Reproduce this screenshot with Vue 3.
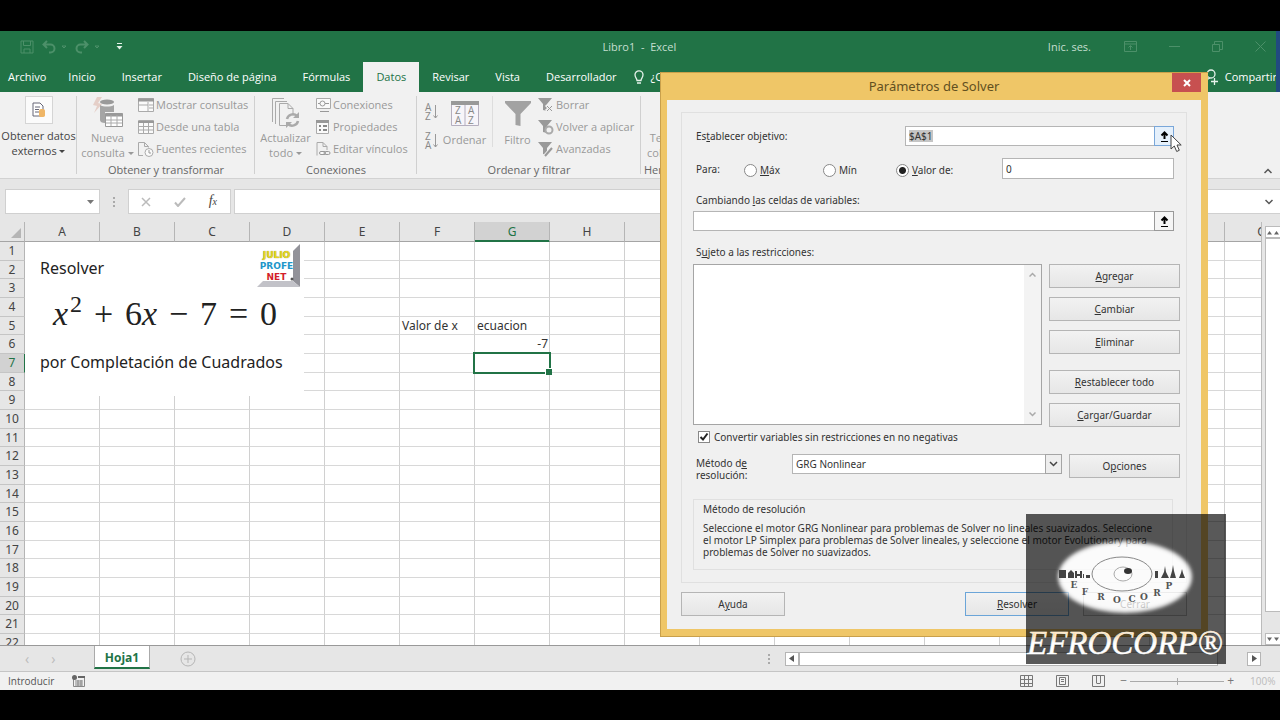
<script setup>
import { ref, computed, onMounted, onUnmounted } from 'vue'

const alphabet = 'ABCDEFGHIJKLMNOPQRSTUVWXYZ'
const view = ref({ width: window.innerWidth, height: window.innerHeight })
const columns = computed(() => alphabet.slice(0, Math.max(8, Math.ceil((view.value.width - 43) / 75))).split(''))
const rowCount = computed(() => Math.max(10, Math.ceil(((view.value.height - 315) * 3) / 56)))
const tableWidth = computed(() => 25 + columns.value.length * 75 + 'px')
const cells = { F5: 'Valor de x', G5: 'ecuacion', G6: '-7' }
const tabs = ['Archivo', 'Inicio', 'Insertar', 'Diseño de página', 'Fórmulas', 'Datos', 'Revisar', 'Vista', 'Desarrollador']
const arcLetters = [
  ['E', 48, 74], ['F', 59, 81], ['R', 75, 86], ['O', 91, 89],
  ['C', 106, 88], ['O', 118, 86], ['R', 131, 82], ['P', 143, 75]
]

const target = ref('$A$1')
const targetInput = ref(null)
const goal = ref('valor')
const goalValue = ref('0')
const variableCells = ref('')
const nonNegative = ref(true)
const method = ref('GRG Nonlinear')
const formula = ref('')
const nameBox = ref('')
const zoomLevel = ref(100)

function measure() {
  view.value = { width: window.innerWidth, height: window.innerHeight }
}

onMounted(() => {
  window.addEventListener('resize', measure)
  targetInput.value.focus()
  targetInput.value.select()
})
onUnmounted(() => window.removeEventListener('resize', measure))
</script>

<template>
  <div class="screen">
    <div class="window">
      <header class="titlebar">
        <div class="quick">
          <button aria-label="Guardar"><svg width="14" height="14" viewBox="0 0 14 14"><path d="M1 1h12v12H1zM3.500 1v4.500h7V1M4 13V9h6v4" /></svg></button>
          <button aria-label="Deshacer"><svg width="25" height="14" viewBox="0 0 25 14"><path d="M5 1 1.500 4.500 5 8M2 4.500h6.500a4 4 0 0 1 0 8H7" stroke-width="2" /><path d="M20 6h4l-2 2z" /></svg></button>
          <button aria-label="Rehacer"><svg width="25" height="14" viewBox="0 0 25 14"><path d="M9 1l3.500 3.500L9 8M12 4.500H5.500a4 4 0 0 0 0 8H7" stroke-width="2" /><path d="M20 6h4l-2 2z" /></svg></button>
          <button class="bright" aria-label="Personalizar"><svg width="7" height="7" viewBox="0 0 7 7"><path d="M1 .500h5" /><path class="solid" d="M.500 3h6L3.500 6.500z" /></svg></button>
        </div>
        <div class="title">Libro1&nbsp; -&nbsp; Excel</div>
        <a class="signin" href="#">Inic. ses.</a>
        <div class="winctl">
          <button aria-label="Opciones de cinta"><svg width="13" height="11" viewBox="0 0 13 11"><path d="M.500.500h12v10H.500zM.500 3h12M6.500 9V5M4.500 6.500l2-2 2 2" /></svg></button>
          <button aria-label="Minimizar"><svg width="11" height="11" viewBox="0 0 11 11"><path d="M0 5.500h11" /></svg></button>
          <button aria-label="Restaurar"><svg width="11" height="11" viewBox="0 0 11 11"><path d="M.500 3.500h7v7h-7zM2.500 3.500v-3h8v8h-3" /></svg></button>
          <button aria-label="Cerrar libro"><svg width="11" height="11" viewBox="0 0 11 11"><path d="M.500.500l10 10M10.500.500l-10 10" /></svg></button>
        </div>
      </header>

      <nav class="tabs">
        <a v-for="t in tabs" :key="t" href="#" :class="{ active: t === 'Datos', file: t === 'Archivo' }">{{ t }}</a>
        <a href="#" class="tell"><svg width="10" height="15" viewBox="0 0 10 15"><path d="M3 10.500C3 8.500 1 7.500 1 4.800a4 4 0 0 1 8 0C9 7.500 7 8.500 7 10.500zM3 13h4" /></svg>¿Qué desea hacer?</a>
        <a href="#" class="share"><svg width="13" height="17" viewBox="0 0 13 17"><circle cx="6" cy="5" r="4" /><path d="M1 15c0-3 1-5 4-6M9.500 9v7M6 12.500h7" /></svg>Compartir</a>
      </nav>

      <section class="ribbon">
        <div class="group g1">
          <button class="big enabled">
            <span class="framed"><svg width="14" height="16" viewBox="0 0 14 16"><path d="M1 1h7l3 3v10H1zM3 5h5M3 7.500h4M3 10h4" fill="#fff" stroke="#667"/><path d="M7 8.500c0-2 6-2 6 0v5c0 2-6 2-6 0z" fill="#efb667" /></svg></span>
            <span>Obtener datos<br>externos <i class="caret"></i></span>
          </button>
        </div>
        <div class="group g2">
          <div class="tools">
            <button class="big">
              <svg width="32" height="32" viewBox="0 0 32 32"><path d="M5 0 1 8l4 1-3 7 8-9-4-1 4-6z" fill="#e5cfc8"/><ellipse cx="15" cy="5" rx="7" ry="2.500" fill="#9a9a9a"/><path d="M8 8c3 2 11 2 14 0v7H13v11c-3 0-5-1-5-3z" fill="#a5a5a5"/><path d="M13.500 16.500h17v13h-17z" fill="#fff" stroke="#999"/><path d="M13.500 18h17" stroke="#999" stroke-width="3"/><path d="M14 23h16M14 26h16M19 18v11M25 18v11" stroke="#aaa"/></svg>
              <span>Nueva<br>consulta <i class="caret"></i></span>
            </button>
            <div class="stack">
              <button><svg width="16" height="14" viewBox="0 0 16 14"><path d="M.500.500h15v13H.500zM10 4v9M1 7h9M11 7h4M11 10h4" fill="#fafafa" stroke="#aaa"/><path d="M0 2h16" stroke="#999" stroke-width="3"/></svg>Mostrar consultas</button>
              <button><svg width="16" height="14" viewBox="0 0 16 14"><path d="M.500.500h15v13H.500zM5.500 2v11M10.500 2v11M1 6.500h15M1 10h15" fill="#fafafa" stroke="#aaa"/><path d="M0 2h16" stroke="#999" stroke-width="2"/></svg>Desde una tabla</button>
              <button><svg width="16" height="15" viewBox="0 0 16 15"><path d="M5 13.500H.500V.500h6l4 4v1M6.500.500v4h4" fill="none" stroke="#aaa"/><circle cx="11" cy="10.500" r="4" fill="#fafafa" stroke="#aaa"/><path d="M11 8v3h2" fill="none" stroke="#999"/></svg>Fuentes recientes</button>
            </div>
          </div>
          <p>Obtener y transformar</p>
        </div>
        <div class="group g3">
          <div class="tools">
            <button class="big">
              <svg width="30" height="32" viewBox="0 0 30 32"><path d="M1.500 25V1.500H13M4.500 27V4.500H16M8.500 28.500v-22H17l5 5v7M17 6.500v5h5M8.500 28.500H15" fill="none" stroke="#aaa"/><path d="M16 22a6 6 0 0 1 10-3M27 24a6 6 0 0 1-10 3" fill="none" stroke="#aaa" stroke-width="2.500"/><path d="M28 15v6h-6zM15 31v-6h6z" fill="#aaa"/></svg>
              <span>Actualizar<br>todo <i class="caret"></i></span>
            </button>
            <div class="stack">
              <button><svg width="15" height="14" viewBox="0 0 15 14"><path d="M.500.500h14v10H.500z" fill="#fafafa" stroke="#aaa"/><circle cx="6.500" cy="5.500" r="2.500" fill="none" stroke="#999"/><path d="M2 5.500h2M9 5.500h4M4 13.500h9" stroke="#999"/></svg>Conexiones</button>
              <button><svg width="15" height="14" viewBox="0 0 15 14"><path d="M.500.500h12v13H.500z" fill="#fafafa" stroke="#aaa"/><path d="M0 1.500h13" stroke="#999" stroke-width="3"/><path d="M3 6h2M3 10h2M7 6h4M7 10h4" stroke="#888" stroke-width="2"/></svg>Propiedades</button>
              <button><svg width="15" height="14" viewBox="0 0 15 14"><path d="M1 13.500V.500h6l4 4V8M7 .500v4h4" fill="none" stroke="#aaa"/><rect x="3.500" y="9.500" width="6" height="3" rx="1.500" fill="#fafafa" stroke="#999"/><rect x="8" y="9.500" width="6" height="3" rx="1.500" fill="none" stroke="#999"/></svg>Editar vínculos</button>
            </div>
          </div>
          <p>Conexiones</p>
        </div>
        <div class="group g4">
          <div class="tools">
            <div class="sorts">
              <button aria-label="Ordenar de A a Z"><svg width="14" height="18" viewBox="0 0 14 18"><text x="0" y="8">A</text><text x="0" y="17">Z</text><path d="M10.500 2v13M8.500 12.500l2 2.500 2-2.500" /></svg></button>
              <button aria-label="Ordenar de Z a A"><svg width="14" height="18" viewBox="0 0 14 18"><text x="0" y="8">Z</text><text x="0" y="17">A</text><path d="M10.500 2v13M8.500 12.500l2 2.500 2-2.500" /></svg></button>
            </div>
            <button class="big sort">
              <svg width="28" height="25" viewBox="0 0 28 25"><path d="M.500.500h27v24H.500zM14 3v21" fill="#f7f5fa" stroke="#b5afbf"/><path d="M0 2h28" stroke="#999" stroke-width="4"/><text x="4" y="13">Z</text><text x="4" y="23">A</text><text x="17" y="13">A</text><text x="17" y="23">Z</text></svg>
              <span>Ordenar</span>
            </button>
            <button class="big filter">
              <svg width="28" height="28" viewBox="0 0 28 28"><path d="M1 1h26v2L16.500 14v12l-5-1V14L1 3z" fill="#a2a2a2"/></svg>
              <span>Filtro</span>
            </button>
            <div class="stack">
              <button><svg width="16" height="15" viewBox="0 0 16 15"><path d="M0 0h14L9 6v7l-4-1V6z" fill="#999"/><path d="M8 7l6 6M14 7l-6 6" stroke="#f1f1f1" stroke-width="3"/><path d="M9 8l5 5M14 8l-5 5" stroke="#999"/></svg>Borrar</button>
              <button><svg width="16" height="15" viewBox="0 0 16 15"><path d="M0 0h14L9 6v7l-4-1V6z" fill="#999"/><circle cx="11" cy="10" r="3.500" fill="#f1f1f1" stroke="#aaa" stroke-width="2"/></svg>Volver a aplicar</button>
              <button><svg width="16" height="15" viewBox="0 0 16 15"><path d="M0 0h14L9 6v7l-4-1V6z" fill="#999"/><path d="M7 14l7-8" stroke="#f1f1f1" stroke-width="4"/><path d="M7 14l7-8" stroke="#999" stroke-width="2"/></svg>Avanzadas</button>
            </div>
          </div>
          <p>Ordenar y filtrar</p>
        </div>
        <div class="group g5">
          <div class="tools">
            <button class="big">
              <svg width="28" height="30" viewBox="0 0 28 30"><path d="M4.500 8.500h18v14h-18zM14 9v13" fill="#fafafa" stroke="#aaa"/></svg>
              <span>Texto en<br>columnas</span>
            </button>
          </div>
          <p>Herramientas de datos</p>
        </div>
        <button class="collapse" aria-label="Contraer la cinta"><svg width="8" height="6" viewBox="0 0 8 6"><path d="M.500 5 4 1.500 7.500 5" /></svg></button>
      </section>

      <section class="formula">
        <div class="namebox"><input v-model="nameBox" aria-label="Cuadro de nombres"><svg width="7" height="4" viewBox="0 0 7 4"><path d="M0 0h7L3.500 4z" fill="#777"/></svg></div>
        <span class="grip"></span>
        <div class="fx">
          <button aria-label="Cancelar"><svg width="10" height="10" viewBox="0 0 10 10"><path d="M1 1l8 8M9 1L1 9" stroke="#bbb" stroke-width="1.500"/></svg></button>
          <button aria-label="Introducir"><svg width="12" height="10" viewBox="0 0 12 10"><path d="M1 5.500 4 9l7-8" fill="none" stroke="#bbb" stroke-width="2"/></svg></button>
          <button class="fn" aria-label="Insertar función">f<small>x</small></button>
        </div>
        <div class="entry"><input v-model="formula" aria-label="Barra de fórmulas"><svg width="8" height="6" viewBox="0 0 8 6"><path d="M.500 1 4 4.500 7.500 1" /></svg></div>
      </section>

      <main class="sheet">
        <div class="cells">
          <table :style="{ width: tableWidth }">
            <thead>
              <tr>
                <th class="corner"><svg width="10" height="10" viewBox="0 0 10 10"><path d="M10 0v10H0z" fill="#b5b5b5"/></svg></th>
                <th v-for="c in columns" :key="c" :class="{ current: c === 'G' }">{{ c }}</th>
              </tr>
            </thead>
            <tbody>
              <tr v-for="r in rowCount" :key="r">
                <th :class="{ current: r === 7 }">{{ r }}</th>
                <td v-for="c in columns" :key="c" :class="{ number: c + r === 'G6', selected: c + r === 'G7' }">{{ cells[c + r] }}</td>
              </tr>
            </tbody>
          </table>
          <div class="picture">
            <div class="logo">
              <svg width="43" height="43" viewBox="0 0 43 43"><path d="M36 7l7-7v43l-7-6z" fill="#929299"/><path d="M0 43l6-6h30l7 6z" fill="#c2c2c8"/><circle cx="35" cy="35" r="1.500" fill="#555"/></svg>
              <b class="yellow">JULIO</b><b class="blue">PROFE</b><b class="red">NET</b>
            </div>
            <p>Resolver</p>
            <div class="equation"><span><i>x</i><sup>2</sup></span><span>+</span><span>6<i>x</i></span><span>−</span><span>7</span><span>=</span><span>0</span></div>
            <p>por Completación de Cuadrados</p>
          </div>
        </div>
        <div class="vscroll">
          <button aria-label="Desplazar arriba"><svg width="14" height="5" viewBox="0 0 14 5"><path d="M1 4.500h5L3.500 1zM8 4.500h5L10.500 1z" /></svg></button>
          <div class="track"></div>
          <button aria-label="Desplazar abajo"><svg width="14" height="5" viewBox="0 0 14 5"><path d="M1 .500h5L3.500 4zM8 .500h5L10.500 4z" /></svg></button>
        </div>
      </main>

      <footer class="sheetbar">
        <div class="arrows"><button aria-label="Hoja anterior">‹</button><button aria-label="Hoja siguiente">›</button></div>
        <a href="#" class="sheettab">Hoja1</a>
        <button class="add" aria-label="Hoja nueva"><svg width="16" height="16" viewBox="0 0 16 16"><circle cx="8" cy="8" r="7" /><path d="M8 4v8M4 8h8" /></svg></button>
        <span class="grip"></span>
        <div class="hscroll">
          <button aria-label="Desplazar a la izquierda"><svg width="5" height="7" viewBox="0 0 5 7"><path d="M5 0v7L0 3.500z" /></svg></button>
          <div class="thumb"></div>
          <button aria-label="Desplazar a la derecha"><svg width="5" height="7" viewBox="0 0 5 7"><path d="M0 0v7l5-3.500z" /></svg></button>
        </div>
      </footer>

      <footer class="status">
        <span>Introducir</span>
        <svg width="13" height="12" viewBox="0 0 13 12"><path d="M1.500 4v7.500h11v-10H6M3 6h8M3 8h8M3 10h8M6 5v6M9 5v6" fill="none" stroke="#888"/><path d="M6 2h7" stroke="#666" stroke-width="2"/><circle cx="2.500" cy="2.500" r="2.500" fill="#666"/></svg>
        <div class="views">
          <button aria-label="Normal"><svg width="13" height="12" viewBox="0 0 13 12"><path d="M.500.500h12v11H.500zM4.500 0v12M8.500 0v12M0 4.500h13M0 8.500h13" /></svg></button>
          <button aria-label="Diseño de página"><svg width="13" height="12" viewBox="0 0 13 12"><path d="M.500.500h12v11H.500zM3.500 2.500h6v7h-6zM5 4.500h3M5 6.500h3" /></svg></button>
          <button aria-label="Vista previa de salto de página"><svg width="13" height="12" viewBox="0 0 13 12"><path d="M.500 11.500V.500h12v11zM4.500 1v7M8.500 1v7M4.500 8.500h4" /></svg></button>
        </div>
        <div class="zoom">
          <button aria-label="Alejar">−</button>
          <input v-model="zoomLevel" type="range" min="10" max="190" aria-label="Zoom">
          <button aria-label="Acercar">+</button>
        </div>
        <span class="percent">100%</span>
      </footer>

      <form class="dialog" role="dialog" aria-labelledby="dlg-title" @submit.prevent>
        <header>
          <h1 id="dlg-title">Parámetros de Solver</h1>
          <button type="button" aria-label="Cerrar cuadro"><svg width="8" height="8" viewBox="0 0 8 8"><path d="M1 1l6 6M7 1L1 7" stroke="#fff" stroke-width="2"/></svg></button>
        </header>
        <div class="body">
          <div class="frame">
            <div class="line first">
              <label for="target">Es<u>t</u>ablecer objetivo:</label>
              <div class="refbox"><input id="target" ref="targetInput" v-model="target"><button type="button" class="hot" aria-label="Elegir celda objetivo"><svg width="9" height="11" viewBox="0 0 9 11"><path d="M4.500 8V2M1.500 4.500l3-3 3 3" /><path d="M1 10.500h7" class="thin" /></svg></button></div>
            </div>
            <div class="line goals">
              <span class="para">Para:</span>
              <label class="max"><input v-model="goal" type="radio" value="max"><span><u>M</u>áx</span></label>
              <label class="min"><input v-model="goal" type="radio" value="min"><span>Mín</span></label>
              <label class="val"><input v-model="goal" type="radio" value="valor"><span><u>V</u>alor de:</span></label>
              <input v-model="goalValue" class="value" aria-label="Valor">
            </div>
            <label class="caption" for="vars">Cambiando <u>l</u>as celdas de variables:</label>
            <div class="refbox wide"><input id="vars" v-model="variableCells"><button type="button" aria-label="Elegir celdas"><svg width="9" height="11" viewBox="0 0 9 11"><path d="M4.500 8V2M1.500 4.500l3-3 3 3" /><path d="M1 10.500h7" class="thin" /></svg></button></div>
            <label class="caption" for="constraints">S<u>u</u>jeto a las restricciones:</label>
            <div class="constraints">
              <div class="list">
                <select id="constraints" size="8"></select>
                <div class="bar"><svg width="7" height="5" viewBox="0 0 7 5"><path d="M.500 4.500l3-3 3 3" /></svg><svg width="7" height="5" viewBox="0 0 7 5"><path d="M.500.500l3 3 3-3" /></svg></div>
              </div>
              <div class="actions">
                <button type="button" class="btn"><u>A</u>gregar</button>
                <button type="button" class="btn"><u>C</u>ambiar</button>
                <button type="button" class="btn"><u>E</u>liminar</button>
                <button type="button" class="btn apart"><u>R</u>establecer todo</button>
                <button type="button" class="btn"><u>C</u>argar/Guardar</button>
              </div>
            </div>
            <label class="check"><input v-model="nonNegative" type="checkbox"><svg width="12" height="12" viewBox="0 0 12 12"><path d="M2.500 6 5 8.500l4.500-6" /></svg>Convertir variables sin restricciones en no negativas</label>
            <div class="method">
              <label for="method">Método d<u>e</u><br>resolución:</label>
              <div class="pick"><select id="method" v-model="method"><option>GRG Nonlinear</option><option>Simplex LP</option><option>Evolutionary</option></select><span><svg width="9" height="6" viewBox="0 0 9 6"><path d="M1 1l3.500 3.500L8 1" /></svg></span></div>
              <button type="button" class="btn">O<u>p</u>ciones</button>
            </div>
            <section class="help">
              <h2>Método de resolución</h2>
              <p>Seleccione el motor GRG Nonlinear para problemas de Solver no lineales suavizados. Seleccione<br>el motor LP Simplex para problemas de Solver lineales, y seleccione el motor Evolutionary para<br>problemas de Solver no suavizados.</p>
            </section>
          </div>
          <div class="bottom">
            <button type="button" class="btn">A<u>y</u>uda</button>
            <button type="submit" class="btn default"><u>R</u>esolver</button>
            <button type="button" class="btn">Cerrar</button>
          </div>
        </div>
        <svg class="pointer" width="12" height="19" viewBox="0 0 12 19"><path d="M1 1v14l3.300-3 2.400 5.500 2.600-1.200L7 11h4.200z" /></svg>
      </form>

      <svg class="watermark" width="200" height="150" viewBox="0 0 200 150">
        <defs>
          <filter id="soft" x="-20%" y="-20%" width="140%" height="140%"><feGaussianBlur stdDeviation="2" /></filter>
          <mask id="hole"><rect width="200" height="150" fill="#fff" /><ellipse cx="99" cy="63" rx="66" ry="35" fill="#000" filter="url(#soft)" /></mask>
          <linearGradient id="cream" x1="0" y1="0" x2="0" y2="1"><stop offset=".3" stop-color="#ffe0b0" /><stop offset=".5" stop-color="#fff" /></linearGradient>
        </defs>
        <rect width="200" height="150" fill="#000" fill-opacity=".65" mask="url(#hole)" />
        <ellipse cx="99" cy="63" rx="66" ry="35" fill="#fff" fill-opacity=".75" filter="url(#soft)" />
        <g fill="none" stroke="#888"><ellipse cx="96" cy="60" rx="30" ry="17" /><ellipse cx="97" cy="60" rx="9" ry="7" stroke="#aaa" /></g>
        <ellipse cx="102" cy="57" rx="4" ry="3" fill="#333" />
        <path d="M33 56h7v8h-7zM42 64v-5l3-3 3 3v5zM49 57h2v3h3v-3h2v7h-2v-2h-3v2h-2zM57 60h1v4h-1zM60 61h4v3h-4zM129 57h3v7h-3zM135 64l3-6 1-6 1 6 3 6zM144 64l2-7 1-6 1 6 2 7zM153 64l2-5 1-4 1 4 2 5z" fill="#444" />
        <text v-for="(l, i) in arcLetters" :key="i" class="arc" :x="l[1]" :y="l[2]">{{ l[0] }}</text>
        <text class="brand" x="1" y="140" fill="url(#cream)">EFROCORP®</text>
      </svg>
      <div class="desktop-edge"></div>
    </div>
  </div>
</template>

<style>
body { background: #000; }
</style>

<style scoped>
* { box-sizing: border-box; }
.screen { height: 100vh; padding: 31px 0 30px; background: #000; font: 11px/14px "Open Sans", "Noto Sans", sans-serif; color: #444; overflow: hidden; }
.window { position: relative; display: flex; flex-direction: column; height: 100%; background: #e6e6e6; overflow: hidden; }
button { font: inherit; color: inherit; border: 0; padding: 0; margin: 0; background: none; }
input, select { font: inherit; color: inherit; margin: 0; outline: 0; min-width: 0; border-radius: 0; }
a { color: inherit; text-decoration: none; }
p, h1, h2 { margin: 0; font: inherit; }
svg { flex: none; display: block; }
u { text-underline-offset: 1px; }

.titlebar { display: flex; align-items: center; height: 31px; background: #217346; position: relative; }
.quick { display: flex; align-items: center; gap: 8px; padding-left: 20px; }
.quick svg, .winctl svg { fill: none; stroke: #4c9069; }
.quick .bright { margin-left: 8px; }
.quick .bright svg { stroke: #e5f2ea; }
.quick .bright .solid { fill: #e5f2ea; stroke: none; }
.title { flex: 1; text-align: center; color: #c5dfd0; padding-left: 108px; }
.signin { color: #c5dfd0; }
.winctl { display: flex; gap: 32px; padding: 0 14px 0 33px; }
.tabs { display: flex; height: 30px; background: #217346; color: #fff; font-weight: 500; line-height: 30px; white-space: nowrap; }
.tabs a { padding: 0 13px; }
.tabs .file { padding: 0 9px 0 8px; }
.tabs .active { background: #f1f1f1; color: #217346; }
.tabs .tell { display: flex; align-items: center; gap: 7px; padding-left: 4px; font-weight: 400; }
.tabs svg { fill: none; stroke: #e5f2ea; stroke-width: 1.3; }
.tabs .share { display: flex; align-items: center; gap: 7px; margin-left: auto; padding: 0 3px; }

.ribbon { display: flex; height: 87px; background: #f1f1f1; border-bottom: 1px solid #d2d2d2; position: relative; color: #999; white-space: nowrap; }
.group { display: flex; flex-direction: column; justify-content: space-between; padding: 4px 0 0; position: relative; flex: none; }
.group::after { content: ""; position: absolute; right: 0; top: 4px; bottom: 4px; width: 1px; background: #d0d0d0; }
.group p { text-align: center; color: #666; line-height: 14px; padding-bottom: 1px; }
.tools { display: flex; align-items: flex-start; }
.g1 { width: 77px; }
.g2 { width: 178px; }
.g3 { width: 162px; }
.g4 { width: 224px; }
.g5 { width: 130px; }
.big { display: flex; flex-direction: column; align-items: center; justify-content: flex-start; gap: 1px; line-height: 15px; padding-top: 1px; }
.enabled { color: #444; gap: 4px; padding: 0; }
.framed { display: grid; place-items: center; width: 28px; height: 28px; background: #fbfbfb; border: 1px solid #d5d5d5; }
.caret { display: inline-block; border: 3px solid transparent; border-top-color: currentColor; border-bottom: 0; vertical-align: 2px; }
.stack { display: flex; flex-direction: column; line-height: 18px; gap: 4px; }
.stack button { display: flex; align-items: center; gap: 2px; height: 18px; }
.g2 .big { width: 61px; }
.g3 .big { width: 61px; }
.g4 .sorts { display: flex; flex-direction: column; gap: 11px; padding: 7px 0 0 8px; width: 24px; }
.g4 svg { overflow: visible; }
.g4 text { font: 10px "Open Sans", sans-serif; fill: #888; }
.sorts path { fill: none; stroke: #999; }
.sort { width: 47px; padding-top: 5px; gap: 6px; }
.filter { width: 46px; padding: 4px 4px 0 8px; gap: 4px; margin-left: 4px; border-left: 1px solid #ddd; }
.g5 .big { padding-left: 6px; }
.g5 .tools { padding-top: 2px; }
.g5 p { text-align: left; padding-left: 3px; }
.collapse { position: absolute; right: 8px; bottom: 4px; }
.collapse svg, .entry svg { fill: none; stroke: #555; stroke-width: 1.500; }

.formula { display: flex; align-items: stretch; height: 43px; padding: 10px 0 8px 5px; }
.namebox, .fx, .entry { display: flex; align-items: center; background: #fff; border: 1px solid #d0d0d0; }
.namebox { width: 95px; padding-right: 5px; }
.namebox input, .entry input { flex: 1; border: 0; background: none; height: 100%; }
.grip { width: 2px; height: 10px; align-self: center; border-left: 2px dotted #aaa; }
.formula .grip { margin: 0 13px; }
.fx { width: 103px; justify-content: space-between; padding: 0 13px 0 12px; }
.fn { font: italic 14px/20px "Liberation Serif", serif; color: #444; }
.fn small { font-size: 10px; }
.entry { flex: 1; margin-left: 3px; border-right: 0; padding-right: 7px; }

.sheet { flex: 1 1 0; min-height: 0; display: flex; background: #e6e6e6; }
.cells { flex: 1 1 0; min-width: 0; overflow: hidden; position: relative; background: #fff; border-right: 1px solid #bbb; }
table { table-layout: fixed; border-collapse: separate; border-spacing: 0; font: 12px/14px "Noto Sans", sans-serif; }
th { font-weight: 400; padding: 0; background: #e6e6e6; border-right: 1px solid #b5b5b5; border-bottom: 1px solid #a5a5a5; color: #444; }
thead th { height: 20px; width: 75px; }
thead .corner { width: 25px; }
.corner svg { margin: 2px 0 0 11px; }
tbody th { border-bottom-color: #c5c5c5; }
td { padding: 0 2px; border-right: 1px solid #d0d0d0; border-bottom: 1px solid #d8d8d8; white-space: nowrap; color: #333; }
tbody tr { height: 19px; }
tbody tr:nth-child(3n + 2) { height: 18px; }
th.current { background: #d2d2d2; color: #217346; border-bottom-color: #217346; }
thead th.current { box-shadow: inset 0 -1px #217346; }
tbody th.current { border-bottom-color: #c5c5c5; border-right-color: #217346; }
.number { text-align: right; padding-right: 1px; }
.selected { position: relative; }
.selected::before { content: ""; position: absolute; inset: -2px -2px -2px -2px; border: 2px solid #217346; }
.selected::after { content: ""; position: absolute; right: -3px; bottom: -3px; width: 6px; height: 6px; background: #217346; border: 1px solid #fff; border-width: 1px 0 0 1px; }
.picture { position: absolute; left: 25px; top: 20px; width: 279px; height: 154px; background: #fff; padding: 14px 0 0 15px; font: 16px/24px "Noto Sans", sans-serif; color: #222; white-space: nowrap; }
.equation { display: flex; justify-content: space-between; width: 224px; margin: 8px 0 10px 13px; font: 34px/52px "Liberation Serif", serif; }
.equation sup { font-size: 24px; line-height: 0; vertical-align: 13px; padding-left: 2px; }
.logo { position: absolute; left: 232px; top: 2px; width: 43px; height: 43px; display: flex; flex-direction: column; align-items: center; padding: 6px 4px 0 0; font: 9px/11px "DejaVu Sans", sans-serif; }
.logo svg { position: absolute; left: 0; top: 0; }
.logo b { position: relative; }
.yellow { color: #e8d820; text-shadow: 0 0 1px #776c00; }
.blue { color: #2196c9; }
.red { color: #d31f2b; }
.vscroll { width: 18px; display: flex; flex-direction: column; padding: 4px 0 0 3px; }
.vscroll button { display: grid; place-items: center; height: 12px; background: #fff; border: 1px solid #bbb; border-right: 0; }
.vscroll path { fill: #666; }
.vscroll .track { flex: 1; background: #fff; border: 1px solid #bbb; border-right: 0; margin-bottom: 21px; }

.sheetbar { display: flex; height: 27px; border-top: 1px solid #999; border-bottom: 1px solid #c5c5c5; background: #e6e6e6; }
.arrows { display: flex; gap: 22px; width: 94px; padding-left: 25px; color: #bbb; font-size: 14px; line-height: 22px; }
.sheettab { width: 56px; height: 23px; background: #fff; border: 1px solid #aaa; border-top: 0; border-bottom: 2px solid #217346; color: #217346; font-size: 12px; font-weight: 700; line-height: 23px; text-align: center; }
.add { margin-left: 30px; }
.add svg { fill: none; stroke: #b5b5b5; }
.sheetbar .grip { margin-left: auto; }
.hscroll { display: flex; align-items: center; width: 37.200%; margin: 0 19px 0 15px; }
.hscroll button { display: grid; place-items: center; width: 14px; height: 14px; background: #fff; border: 1px solid #b5b5b5; }
.hscroll path { fill: #555; }
.hscroll .thumb { flex: 1; height: 14px; margin-right: 29px; background: #fff; border: 1px solid #b5b5b5; }
.status { display: flex; align-items: center; height: 18px; background: #f1f1f1; font-size: 10px; padding-left: 8px; color: #555; }
.status > svg { margin-left: 18px; }
.views { display: flex; gap: 23px; margin-left: auto; }
.views svg { fill: none; stroke: #777; }
.zoom { display: flex; align-items: center; margin-left: 15px; font-size: 12px; color: #777; }
.zoom input { appearance: none; width: 94px; height: 9px; margin: 0 3px; background: linear-gradient(#aaa, #aaa) center / 100% 1px no-repeat, linear-gradient(#aaa, #aaa) center / 1px 7px no-repeat; }
.zoom input::-webkit-slider-thumb { appearance: none; width: 1px; height: 7px; background: #aaa; }
.percent { margin-left: 16px; color: #bbb; width: 30px; }

.dialog { position: absolute; left: 660px; top: 41px; width: 548px; padding: 0 7px 7px 6px; background: #efc667; border: 1px solid #c9a04b; border-width: 1px 0 1px 1px; font: 10px/12px "Noto Sans", sans-serif; color: #333; }
.dialog header { position: relative; height: 27px; display: flex; justify-content: center; }
.dialog h1 { font-size: 13px; line-height: 26px; color: #62501f; }
.dialog header button { position: absolute; right: 0; top: 0; width: 29px; height: 19px; display: grid; place-items: center; background: #c75050; }
.body { background: #f0f0f0; padding: 12px 14px 13px; }
.frame { border: 1px solid #e0e0e0; padding: 13px 6px 12px 11px; }
.line { display: flex; margin-right: 6px; padding-left: 3px; }
.first { justify-content: space-between; align-items: center; height: 20px; }
.refbox { display: flex; width: 269px; height: 20px; background: #fff; border: 1px solid #b5b5b5; }
.refbox input { flex: 1; border: 0; background: none; padding: 0 3px; caret-color: transparent; }
.refbox input::selection { background: #c5c5c5; color: #333; }
.refbox button { display: grid; place-items: center; width: 20px; margin: -1px; border: 1px solid #999; background: #f5f5f5; }
.refbox .hot { border-color: #7aa7d9; background: #e5f0fb; }
.refbox svg { fill: none; stroke: #000; stroke-width: 2; }
.refbox .thin { stroke-width: 1; }
.goals { height: 21px; margin-top: 12px; align-items: center; }
.goals label { display: flex; align-items: center; gap: 3px; padding-top: 3px; }
.para { width: 48px; }
.goals .max { width: 79px; }
.goals .min { width: 73px; }
.goals [type="radio"] { appearance: none; width: 13px; height: 13px; border: 1px solid #888; border-radius: 50%; background: #fff; }
.goals [type="radio"]:checked { background: radial-gradient(circle, #222 3px, #fff 4px); }
.value { width: 172px; height: 21px; margin-left: auto; border: 1px solid #b5b5b5; background: #fff; padding: 0 3px; }
.caption { display: block; margin: 15px 0 0 3px; height: 12px; }
.wide { width: auto; margin: 5px 6px 0 0; }
.constraints { display: flex; gap: 7px; margin-top: 6px; align-items: flex-start; }
.list { flex: 1; display: flex; height: 161px; background: #fff; border: 1px solid #a5a5a5; }
.list select { flex: 1; border: 0; background: none; height: 100%; overflow: hidden; }
.bar { display: flex; flex-direction: column; justify-content: space-between; align-items: center; width: 17px; padding: 7px 0; background: #f3f3f3; }
.bar svg { fill: none; stroke: #aaa; stroke-width: 1.500; }
.actions { display: flex; flex-direction: column; gap: 9px; width: 131px; }
.btn { height: 24px; border: 1px solid #b5b5b5; background: linear-gradient(#f2f2f2, #e6e6e6); text-align: center; }
.apart { margin-top: 7px; }
.check { display: flex; align-items: center; gap: 4px; margin: 3px 0 0 5px; height: 13px; position: relative; }
.check input { appearance: none; width: 12px; height: 12px; border: 1px solid #888; background: #fff; }
.check svg { position: absolute; left: 0; fill: none; stroke: #222; stroke-width: 2; }
.check input:not(:checked) + svg { display: none; }
.method { display: flex; align-items: flex-start; margin-top: 11px; padding-left: 3px; }
.method label { width: 96px; padding-top: 3px; }
.pick { position: relative; flex: 1; margin-right: 7px; }
.pick select { appearance: none; width: 100%; height: 20px; border: 1px solid #b5b5b5; background: #fff; padding: 0 3px; }
.pick span { position: absolute; right: 0; top: 0; width: 17px; height: 20px; display: grid; place-items: center; border: 1px solid #a5a5a5; background: #eee; pointer-events: none; }
.pick path { fill: none; stroke: #444; stroke-width: 1.500; }
.method .btn { width: 111px; }
.help { margin: 18px 7px 0 0; border: 1px solid #e0e0e0; padding: 3px 0 11px 9px; white-space: nowrap; }
.help p { margin-top: 7px; }
.bottom { display: flex; gap: 14px; margin-top: 9px; }
.bottom .btn { width: 104px; }
.bottom .default { margin-left: auto; border-color: #6ba5d8; }
.pointer { position: absolute; left: 509px; top: 61px; fill: #fff; stroke: #444; }
.watermark { position: absolute; left: 1026px; top: 483px; }
.arc { font: bold 9px "DejaVu Serif", serif; fill: #555; text-anchor: middle; }
.brand { font: italic 33px "Liberation Serif", serif; stroke: #fff; stroke-width: 0.500; }
.desktop-edge { position: absolute; right: 0; top: 0; width: 4px; height: 61px; background: #214a80; }
</style>
